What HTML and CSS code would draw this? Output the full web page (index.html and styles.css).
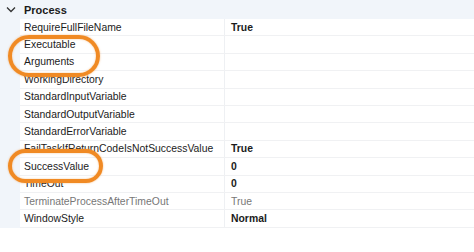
FILE: index.html
```html
<!DOCTYPE html>
<html>
<head>
<meta charset="utf-8">
<link rel="stylesheet" href="styles.css">
</head>
<body>
<div class="grid">
  <div class="header">
    <svg class="chev" width="10" height="7" viewBox="0 0 10 7"><path d="M1 1.5 L5 5.5 L9 1.5" fill="none" stroke="#333" stroke-width="1.3"/></svg>
    <span class="cat">Process</span>
  </div>
  <div class="body">
    <div class="gutter"></div>
    <div class="rows">
      <div class="row"><div class="name">RequireFullFileName</div><div class="val b">True</div></div>
      <div class="row"><div class="name">Executable</div><div class="val"></div></div>
      <div class="row"><div class="name">Arguments</div><div class="val"></div></div>
      <div class="row"><div class="name">WorkingDirectory</div><div class="val"></div></div>
      <div class="row"><div class="name">StandardInputVariable</div><div class="val"></div></div>
      <div class="row"><div class="name">StandardOutputVariable</div><div class="val"></div></div>
      <div class="row"><div class="name">StandardErrorVariable</div><div class="val"></div></div>
      <div class="row"><div class="name">FailTaskIfReturnCodeIsNotSuccessValue</div><div class="val b">True</div></div>
      <div class="row"><div class="name">SuccessValue</div><div class="val b">0</div></div>
      <div class="row"><div class="name">TimeOut</div><div class="val b">0</div></div>
      <div class="row dis"><div class="name">TerminateProcessAfterTimeOut</div><div class="val">True</div></div>
      <div class="row"><div class="name">WindowStyle</div><div class="val b">Normal</div></div>
    </div>
  </div>
</div>
<div class="ring ring1"></div>
<div class="ring ring2"></div>
</body>
</html>
```
FILE: styles.css
```css
html, body {
  margin: 0;
  padding: 0;
  background: #ffffff;
  width: 474px;
  height: 252px;
  overflow: hidden;
  font-family: "Liberation Sans", Arial, sans-serif;
  font-size: 10.4px;
  color: #1b1b1b;
}
.grid {
  display: flex;
  flex-direction: column;
}
.header {
  height: 19px;
  background: #f1f5fa;
  display: flex;
  align-items: center;
}
.chev {
  margin-left: 6px;
  width: 10px;
  margin-right: 8px;
}
.cat {
  font-weight: bold;
  font-size: 11px;
}
.body {
  display: flex;
}
.gutter {
  width: 20px;
  background: #f1f5fa;
}
.rows {
  flex: 1;
  display: flex;
  flex-direction: column;
}
.row {
  height: 17.4px;
  box-sizing: border-box;
  border-bottom: 1px solid #f0f1f3;
  display: flex;
  align-items: center;
}
.name {
  width: 205px;
  box-sizing: border-box;
  padding-left: 4px;
  height: 100%;
  display: flex;
  align-items: center;
  border-right: 1px solid #eef0f3;
  white-space: nowrap;
  overflow: hidden;
}
.val {
  padding-left: 6px;
  flex: 1;
}
.b { font-weight: bold; }
.dis .name, .dis .val { color: #777777; }
.ring {
  position: absolute;
  border: 4px solid #f08a24;
  border-radius: 22px;
  box-shadow: 0 0 2px rgba(240,138,36,0.6), inset 0 0 2px rgba(240,138,36,0.5);
  box-sizing: border-box;
}
.ring1 {
  left: 8px;
  top: 35px;
  width: 92px;
  height: 42px;
}
.ring2 {
  left: 8px;
  top: 149px;
  width: 95px;
  height: 34px;
  border-radius: 17px;
}
```
